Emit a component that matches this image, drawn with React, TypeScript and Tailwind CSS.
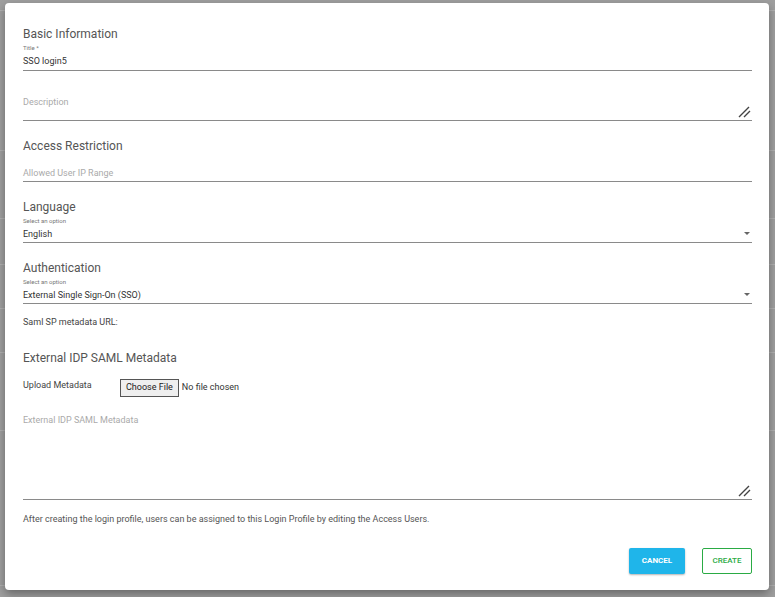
import React from "react";

const font = { fontFamily: "Roboto, 'Liberation Sans', sans-serif" };

function Heading({ children, className = "" }: { children: React.ReactNode; className?: string }) {
  return <div className={`text-[12px] leading-[16px] text-[#555] ${className}`}>{children}</div>;
}

function TinyLabel({ children, className = "" }: { children: React.ReactNode; className?: string }) {
  return <div className={`text-[6px] leading-[8px] text-[#777] ${className}`}>{children}</div>;
}

function ResizeGrip() {
  return (
    <svg width="13" height="12" viewBox="0 0 13 12" className="absolute right-[1px] bottom-[2px]">
      <path d="M1 11 L11 1 M6 11 L12 5" stroke="#444" strokeWidth="1.4" />
    </svg>
  );
}

function Caret() {
  return (
    <svg width="6" height="4" viewBox="0 0 6 4" className="absolute right-[2px] bottom-[6px]">
      <path d="M0 0 H6 L3 3 Z" fill="#666" />
    </svg>
  );
}

function Backdrop() {
  const rows = [10, 150, 218, 264, 308, 352, 430, 585];
  return (
    <div aria-hidden className="pointer-events-none absolute inset-0 bg-[#9f9f9f]">
      {rows.map((y) => (
        <div key={y} className="absolute inset-x-0 h-px bg-[#b0b0b0]" style={{ top: y }} />
      ))}
    </div>
  );
}

export default function App() {
  return (
    <div className="relative h-[597px] w-[775px] overflow-hidden" style={font}>
      <Backdrop />
      <div className="relative ml-[5px] mt-[3px] flex h-[587px] w-[764px] flex-col rounded-[4px] bg-white pl-[18px] pr-[17px] pt-[23px] shadow-[0_4px_10px_rgba(0,0,0,0.35)]">
        <Heading>Basic Information</Heading>
        <TinyLabel className="mt-[2px]">Title *</TinyLabel>
        <div className="mt-[3px] border-b border-[#8a8a8a] pb-[3px] text-[9px] leading-[12px] text-[#333]">SSO login5</div>

        <div className="relative mt-[21px] h-[29px] border-b border-[#8a8a8a] pt-[4px] text-[9px] leading-[12px] text-[#aaa]">
          Description
          <ResizeGrip />
        </div>

        <Heading className="mt-[17px]">Access Restriction</Heading>
        <div className="mt-[13px] border-b border-[#8a8a8a] pb-[2px] text-[9px] leading-[12px] text-[#aaa]">Allowed User IP Range</div>

        <Heading className="mt-[17px]">Language</Heading>
        <TinyLabel className="mt-[2px]">Select an option</TinyLabel>
        <div className="relative mt-[3px] border-b border-[#8a8a8a] pb-[2px] text-[9px] leading-[12px] text-[#333]">
          English
          <Caret />
        </div>

        <Heading className="mt-[17px]">Authentication</Heading>
        <TinyLabel className="mt-[2px]">Select an option</TinyLabel>
        <div className="relative mt-[3px] border-b border-[#8a8a8a] pb-[2px] text-[9px] leading-[12px] text-[#333]">
          External Single Sign-On (SSO)
          <Caret />
        </div>

        <div className="mt-[12px] text-[9px] leading-[12px] text-[#444]">Saml SP metadata URL:</div>

        <Heading className="mt-[22px]">External IDP SAML Metadata</Heading>

        <div className="mt-[13px] flex items-center text-[9px] text-[#444]">
          <span className="-mt-[4px] w-[97px]">Upload Metadata</span>
          <span className="flex h-[18px] items-center border border-[#555] bg-[#efefef] px-[5px] text-[9px] text-[#222]">Choose File</span>
          <span className="ml-[3px] text-[#333]">No file chosen</span>
        </div>

        <div className="relative mt-[14px] h-[89px] border-b border-[#8a8a8a] pt-[3px] text-[9px] leading-[12px] text-[#aaa]">
          External IDP SAML Metadata
          <ResizeGrip />
        </div>

        <div className="mt-[13px] text-[9px] leading-[12px] text-[#555]">
          After creating the login profile, users can be assigned to this Login Profile by editing the Access Users.
        </div>

        <div className="mt-[23px] flex justify-end gap-[17px]">
          <button className="h-[26px] w-[56px] rounded-[2px] bg-[#1fb5ea] text-[8px] font-bold text-white shadow-[0_1px_2px_rgba(0,0,0,0.3)]">CANCEL</button>
          <button className="h-[26px] w-[50px] rounded-[2px] border border-[#2aab44] bg-white text-[8px] font-medium text-[#2aab44]">CREATE</button>
        </div>
      </div>
    </div>
  );
}
